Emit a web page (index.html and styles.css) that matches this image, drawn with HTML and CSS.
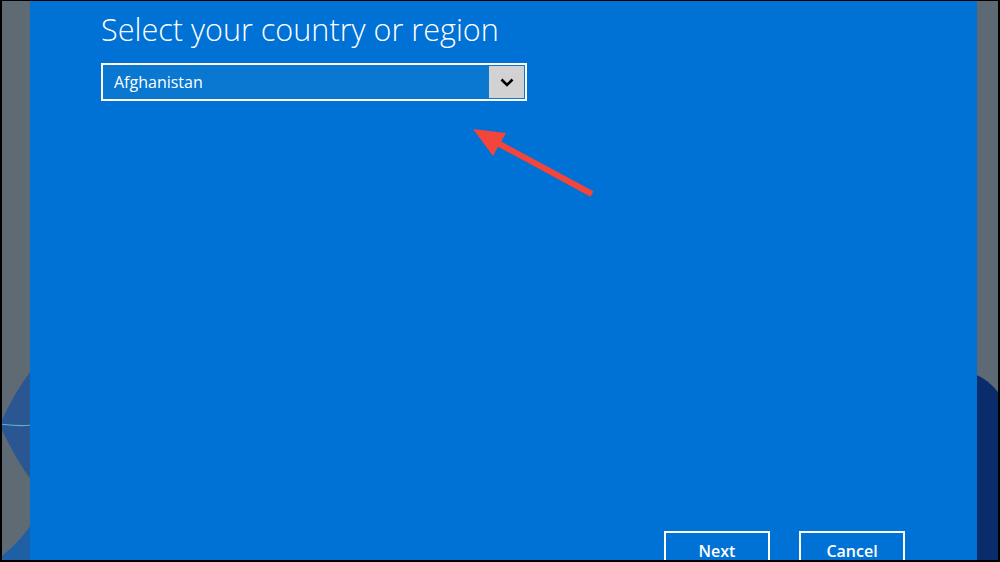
FILE: index.html
```html
<!DOCTYPE html>
<html lang="en">
<head>
<meta charset="utf-8">
<title>Select your country or region</title>
<link rel="stylesheet" href="styles.css">
</head>
<body>
<div class="frame">
  <div class="side side-left">
    <svg class="wall" viewBox="0 0 28 560" preserveAspectRatio="none">
      <path d="M28 372 C18 385 8 402 0 420 L0 430 C8 446 16 462 28 478 Z" fill="#2a5791"/>
      <path d="M0 424 C8 425 18 426 28 425" stroke="#58b4c8" stroke-width="1.2" fill="none"/>
      <path d="M28 526 C20 538 10 548 0 556 L0 560 L28 560 Z" fill="#1f5fa6"/>
    </svg>
  </div>
  <main class="panel">
    <h1 class="title">Select your country or region</h1>
    <div class="select">
      <span class="select-value">Afghanistan</span>
      <span class="select-btn">
        <svg width="14" height="9" viewBox="0 0 14 9"><path d="M1.5 1.5 L7 7 L12.5 1.5" stroke="#000" stroke-width="2.6" fill="none"/></svg>
      </span>
    </div>
    <div class="actions">
      <button class="btn">Next</button>
      <button class="btn">Cancel</button>
    </div>
    <svg class="arrow" viewBox="0 0 200 140" width="200" height="140">
      <line x1="162" y1="129" x2="62" y2="75" stroke="#f2453b" stroke-width="6"/>
      <polygon points="43,64 76,68 63,91" fill="#f2453b"/>
    </svg>
  </main>
  <div class="side side-right">
    <svg class="wall" viewBox="0 0 21 560" preserveAspectRatio="none">
      <path d="M0 375 C7 378 15 384 21 392 L21 560 L0 560 Z" fill="#0b2c6c"/>
    </svg>
  </div>
</div>
</body>
</html>
```
FILE: styles.css
```css
html, body {
  margin: 0;
  padding: 0;
  background: #000;
  width: 1000px;
  height: 562px;
  overflow: hidden;
}

.frame {
  box-sizing: border-box;
  width: 1000px;
  height: 562px;
  padding: 1px 2px 2px 2px;
  display: flex;
}

.side {
  position: relative;
  background: #5f6b74;
  height: 100%;
}

.side-left { width: 28px; }
.side-right { width: 21px; background: #5d6973; }

.wall {
  display: block;
  width: 100%;
  height: 100%;
}

.panel {
  position: relative;
  flex: 1;
  background: #0071d5;
  display: flex;
  flex-direction: column;
  padding-left: 71px;
  overflow: hidden;
}

.title {
  margin: 8px 0 0 0;
  font-family: "Open Sans", sans-serif;
  font-weight: 300;
  font-size: 30.6px;
  line-height: 40px;
  color: #fff;
}

.select {
  margin-top: 14px;
  box-sizing: border-box;
  width: 426px;
  height: 38px;
  border: 2px solid #fff;
  padding: 1px;
  background: #0a77d1;
  display: flex;
  align-items: stretch;
}

.select-value {
  flex: 1;
  display: flex;
  align-items: center;
  padding-left: 10px;
  font-family: "Open Sans", sans-serif;
  font-size: 16px;
  color: #fff;
}

.select-btn {
  width: 35px;
  background: #d2d2d2;
  display: flex;
  align-items: center;
  justify-content: center;
}

.actions {
  margin-top: auto;
  margin-bottom: -14px;
  margin-left: 563px;
  display: flex;
  gap: 29px;
}

.btn {
  box-sizing: border-box;
  width: 106px;
  height: 43px;
  border: 2px solid #fff;
  background: #0071d5;
  color: #fff;
  font-family: "Open Sans", sans-serif;
  font-weight: 600;
  font-size: 16px;
  padding: 0;
  padding-bottom: 4px;
}

.arrow {
  position: absolute;
  left: 400px;
  top: 64px;
  overflow: visible;
}
```
